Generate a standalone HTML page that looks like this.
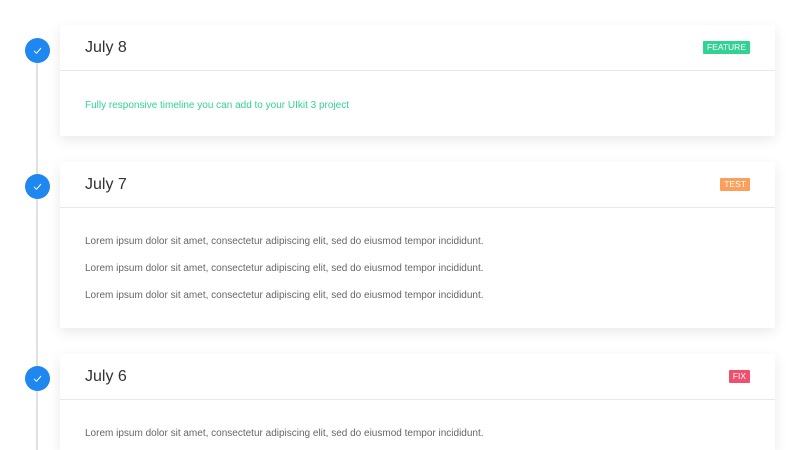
<!DOCTYPE html>
<html><head><style>
*{margin:0;padding:0;box-sizing:border-box}
html,body{width:800px;height:450px;overflow:hidden}
body{background:#fff;font-family:"Liberation Sans",sans-serif;position:relative}
.line{position:absolute;left:36px;width:2px;background:#e0e0e0}
.dot{position:absolute;left:25px;width:25px;height:25px;border-radius:50%;background:#1e87f0}
.dot svg{position:absolute;left:6px;top:6px}
.card{position:absolute;left:60px;width:715px;background:#fff;box-shadow:0 4px 12px rgba(0,0,0,.09);overflow:hidden}
.hd{height:46px;border-bottom:1px solid #e8e8e8;position:relative}
.hd h3{position:absolute;left:25px;top:14px;font-size:16px;font-weight:normal;color:#333}
.lb{position:absolute;right:25px;top:16px;height:13px;line-height:13px;font-size:8.5px;color:#fff;padding:0 4px;border-radius:1px}
.bd{padding:27px 25px 0;font-size:10px;color:#666}
.bd p{height:27px;line-height:14px}
</style></head><body>
<div class="line" style="top:50px;height:400px"></div>
<div class="dot" style="top:38px"><svg width="13" height="13" viewBox="0 0 13 13"><path d="M3 6.8l2.5 2.5L10 4" fill="none" stroke="#fff" stroke-width="1"/></svg></div>
<div class="dot" style="top:174px"><svg width="13" height="13" viewBox="0 0 13 13"><path d="M3 6.8l2.5 2.5L10 4" fill="none" stroke="#fff" stroke-width="1"/></svg></div>
<div class="dot" style="top:366px"><svg width="13" height="13" viewBox="0 0 13 13"><path d="M3 6.8l2.5 2.5L10 4" fill="none" stroke="#fff" stroke-width="1"/></svg></div>

<div class="card" style="top:25px;height:111px">
<div class="hd"><h3>July 8</h3><span class="lb" style="background:#32d296">FEATURE</span></div>
<div class="bd" style="padding-top:28px"><p style="color:#32d296">Fully responsive timeline you can add to your UIkit 3 project</p></div>
</div>
<div class="card" style="top:162px;height:166px">
<div class="hd"><h3>July 7</h3><span class="lb" style="background:#faa05a">TEST</span></div>
<div class="bd"><p>Lorem ipsum dolor sit amet, consectetur adipiscing elit, sed do eiusmod tempor incididunt.</p><p>Lorem ipsum dolor sit amet, consectetur adipiscing elit, sed do eiusmod tempor incididunt.</p><p>Lorem ipsum dolor sit amet, consectetur adipiscing elit, sed do eiusmod tempor incididunt.</p></div>
</div>
<div class="card" style="top:354px;height:96px">
<div class="hd"><h3>July 6</h3><span class="lb" style="background:#f0506e">FIX</span></div>
<div class="bd"><p>Lorem ipsum dolor sit amet, consectetur adipiscing elit, sed do eiusmod tempor incididunt.</p></div>
</div>
</body></html>
